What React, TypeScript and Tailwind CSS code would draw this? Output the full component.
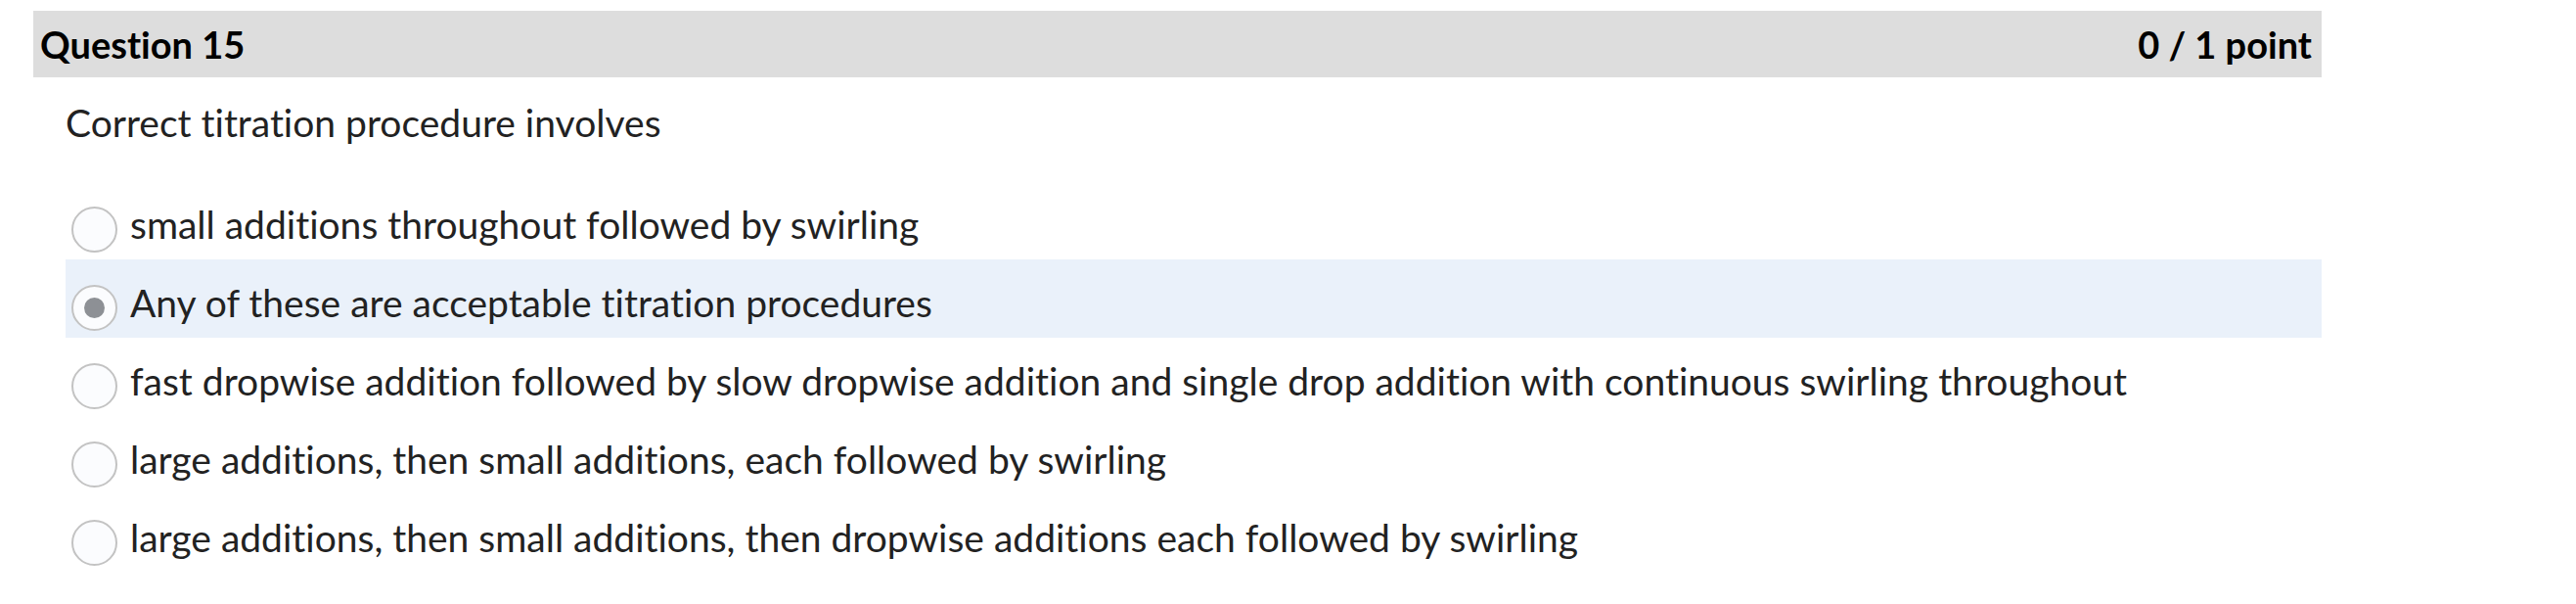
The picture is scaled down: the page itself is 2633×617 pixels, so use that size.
import { useState } from "react";

const options = [
  "small additions throughout followed by swirling",
  "Any of these are acceptable titration procedures",
  "fast dropwise addition followed by slow dropwise addition and single drop addition with continuous swirling throughout",
  "large additions, then small additions, each followed by swirling",
  "large additions, then small additions, then dropwise additions each followed by swirling",
];

function Radio({ checked }: { checked: boolean }) {
  return (
    <span className="mt-[26px] ml-[6px] flex h-[47px] w-[47px] shrink-0 items-center justify-center rounded-full border-2 border-[#c3c3c3] bg-[#fbfcfe]">
      {checked && <span className="h-[21px] w-[21px] rounded-full bg-[#8d9095]" />}
    </span>
  );
}

export default function App() {
  const [selected, setSelected] = useState(1);

  return (
    <div className="min-h-[617px] bg-white pt-[11px] font-['Lato','Liberation_Sans',sans-serif] text-[#222] [font-variant-ligatures:none]">
      <div className="ml-[34px] w-[2339px]">
        <div className="flex h-[68px] items-center justify-between bg-[#dddddd] pl-[7px] pr-[10px] text-[38px] font-bold text-black">
          <span>Question 15</span>
          <span>0 / 1 point</span>
        </div>

        <div className="pl-[33px]">
          <p className="mt-[25px] text-[39px] leading-[43px]">Correct titration procedure involves</p>

          <div className="mt-[38px] flex flex-col">
            {options.map((opt, i) => (
              <label
                key={i}
                onClick={() => setSelected(i)}
                className={`flex h-[80px] cursor-pointer items-start ${i === selected ? "bg-[#eaf1fa]" : ""}`}
              >
                <Radio checked={i === selected} />
                <span className="ml-[13px] pt-[8px] text-[39px] leading-[72px]">{opt}</span>
              </label>
            ))}
          </div>
        </div>
      </div>
    </div>
  );
}
